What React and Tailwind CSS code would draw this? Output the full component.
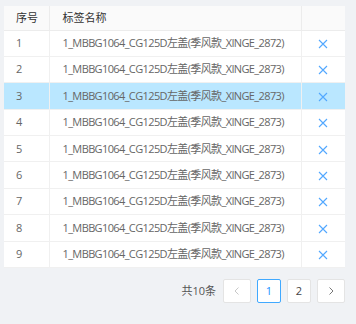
import React from "react";

const rows = Array.from({ length: 9 }, (_, i) => ({
  no: i + 1,
  name: `1_MBBG1064_CG125D左盖(季风款_XINGE_${i === 0 ? "2872" : "2873"})`,
}));

function CloseIcon() {
  return (
    <svg width="10" height="10" viewBox="0 0 10 10" className="inline-block">
      <path d="M1 1 L9 9 M9 1 L1 9" stroke="#52a8ff" strokeWidth="1.1" fill="none" />
    </svg>
  );
}

function Chevron({ dir, color }) {
  return (
    <svg width="8" height="10" viewBox="0 0 8 10">
      <path
        d={dir === "left" ? "M5.5 1.5 L2 5 L5.5 8.5" : "M2.5 1.5 L6 5 L2.5 8.5"}
        stroke={color}
        strokeWidth="1"
        fill="none"
      />
    </svg>
  );
}

export default function App() {
  const selected = 3;
  return (
    <div
      className="w-[356px] h-[324px] bg-[#f0f2f5] pt-[6px] pl-[4px] text-[11px]"
      style={{ fontFamily: '"Open Sans", "Noto Sans CJK SC", sans-serif' }}
    >
      <table className="w-[341px] border-collapse bg-white table-fixed">
        <colgroup>
          <col className="w-[45px]" />
          <col className="w-[252px]" />
          <col className="w-[44px]" />
        </colgroup>
        <thead>
          <tr className="h-[24px] bg-[#fafafa] text-[#333]">
            <th className="text-left font-normal pl-[12px] border-r border-b border-[#ececec]">序号</th>
            <th className="text-left font-normal pl-[13px] border-r border-b border-[#ececec]">标签名称</th>
            <th className="border-b border-[#ececec]"></th>
          </tr>
        </thead>
        <tbody>
          {rows.map((r) => (
            <tr
              key={r.no}
              className={`h-[26.4px] text-[#666] ${r.no === selected ? "bg-[#bae7ff]" : "bg-white"}`}
            >
              <td className="pl-[12px] border-r border-b border-[#f0f0f0]">{r.no}</td>
              <td className="pl-[13px] border-r border-b border-[#f0f0f0] whitespace-nowrap tracking-[-0.62px]">
                {r.name}
              </td>
              <td className="text-center border-b border-[#f0f0f0]">
                <CloseIcon />
              </td>
            </tr>
          ))}
        </tbody>
      </table>

      <div className="flex items-center justify-end w-[341px] mt-[11px] gap-[6px] text-[#555]">
        <span className="mr-[1px]">共10条</span>
        <button className="w-[28px] h-[24px] bg-white border border-[#e4e4e4] rounded-[2px] flex items-center justify-center">
          <Chevron dir="left" color="#c8c8c8" />
        </button>
        <button className="w-[24px] h-[24px] bg-white border border-[#40a9ff] rounded-[2px] text-[#1890ff]">1</button>
        <button className="w-[24px] h-[24px] bg-white border border-[#e4e4e4] rounded-[2px] text-[#444]">2</button>
        <button className="w-[28px] h-[24px] bg-white border border-[#e4e4e4] rounded-[2px] flex items-center justify-center">
          <Chevron dir="right" color="#777" />
        </button>
      </div>
    </div>
  );
}
